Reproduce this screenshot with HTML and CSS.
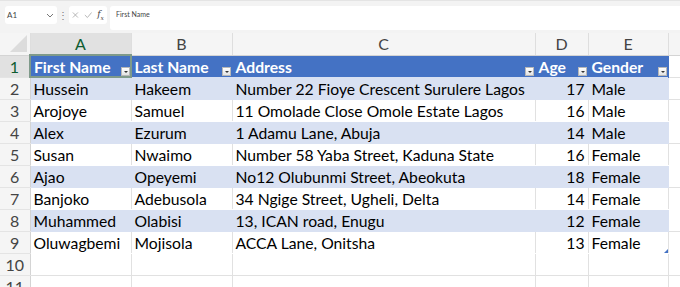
FILE: index.html
```html
<!DOCTYPE html>
<html lang="en">
  <head>
    <meta charset="UTF-8" />
    <title>Sheet1</title>
    <link rel="stylesheet" href="styles.css">
  </head>
  <body>
    <div class="formula-bar">
      <div class="name-box">
        <span>A1</span>
        <svg width="8" height="5" viewBox="0 0 8 5"><path d="M1 1 L4 4 L7 1" fill="none" stroke="#777" stroke-width="1"/></svg>
      </div>
      <div class="grip">&#8942;</div>
      <div class="fx-box">
        <svg width="8" height="8" viewBox="0 0 8 8"><path d="M1 1 L7 7 M7 1 L1 7" stroke="#aaa" stroke-width="1"/></svg>
        <svg width="10" height="8" viewBox="0 0 10 8"><path d="M1 4 L4 7 L9 1" fill="none" stroke="#aaa" stroke-width="1"/></svg>
        <span class="fx">f<sub>x</sub></span>
      </div>
      <div class="formula-input">First Name</div>
    </div>

    <table class="sheet">
      <colgroup>
        <col class="c-row" />
        <col class="c-a" />
        <col class="c-b" />
        <col class="c-c" />
        <col class="c-d" />
        <col class="c-e" />
        <col class="c-f" />
      </colgroup>
      <thead>
        <tr class="col-heads">
          <th class="corner"><span class="corner-tri"></span></th>
          <th class="active">A</th>
          <th>B</th>
          <th>C</th>
          <th>D</th>
          <th>E</th>
          <th></th>
        </tr>
      </thead>
      <tbody>
        <tr class="tbl-head">
          <th class="row-num active">1</th>
          <td class="selected">First Name<span class="filter"></span></td>
          <td>Last Name<span class="filter"></span></td>
          <td>Address<span class="filter"></span></td>
          <td>Age<span class="filter"></span></td>
          <td>Gender<span class="filter"></span></td>
          <td class="blank"></td>
        </tr>
        <tr class="band">
          <th class="row-num">2</th>
          <td>Hussein</td><td>Hakeem</td><td>Number 22 Fioye Crescent Surulere Lagos</td><td class="num">17</td><td>Male</td><td class="blank"></td>
        </tr>
        <tr>
          <th class="row-num">3</th>
          <td>Arojoye</td><td>Samuel</td><td>11 Omolade Close Omole Estate Lagos</td><td class="num">16</td><td>Male</td><td class="blank"></td>
        </tr>
        <tr class="band">
          <th class="row-num">4</th>
          <td>Alex</td><td>Ezurum</td><td>1 Adamu Lane, Abuja</td><td class="num">14</td><td>Male</td><td class="blank"></td>
        </tr>
        <tr>
          <th class="row-num">5</th>
          <td>Susan</td><td>Nwaimo</td><td>Number 58 Yaba Street, Kaduna State</td><td class="num">16</td><td>Female</td><td class="blank"></td>
        </tr>
        <tr class="band">
          <th class="row-num">6</th>
          <td>Ajao</td><td>Opeyemi</td><td>No12 Olubunmi Street, Abeokuta</td><td class="num">18</td><td>Female</td><td class="blank"></td>
        </tr>
        <tr>
          <th class="row-num">7</th>
          <td>Banjoko</td><td>Adebusola</td><td>34 Ngige Street, Ugheli, Delta</td><td class="num">14</td><td>Female</td><td class="blank"></td>
        </tr>
        <tr class="band">
          <th class="row-num">8</th>
          <td>Muhammed</td><td>Olabisi</td><td>13, ICAN road, Enugu</td><td class="num">12</td><td>Female</td><td class="blank"></td>
        </tr>
        <tr class="last">
          <th class="row-num">9</th>
          <td>Oluwagbemi</td><td>Mojisola</td><td>ACCA Lane, Onitsha</td><td class="num">13</td><td class="resize">Female<span class="handle"></span></td><td class="blank"></td>
        </tr>
        <tr class="empty">
          <th class="row-num">10</th>
          <td></td><td></td><td></td><td></td><td></td><td></td>
        </tr>
        <tr class="empty">
          <th class="row-num">11</th>
          <td></td><td></td><td></td><td></td><td></td><td></td>
        </tr>
      </tbody>
    </table>
  </body>
</html>
```

FILE: styles.css
```css
body {
  margin: 0;
  overflow: hidden;
  background: #fff;
  font-family: "Lato", "Liberation Sans", sans-serif;
}

/* formula bar */
.formula-bar {
  display: flex;
  align-items: flex-start;
  height: 33px;
  box-sizing: border-box;
  padding: 5px 0 0 5px;
  background: #f3f3f3;
  border-top: 1px solid #e4e4e4;
}

.name-box {
  display: flex;
  align-items: center;
  justify-content: space-between;
  width: 52px;
  height: 18px;
  box-sizing: border-box;
  padding: 0 3px 0 2px;
  background: #fff;
  border-radius: 3px;
  font-size: 8px;
  color: #444;
}

.grip {
  width: 12px;
  text-align: center;
  font-size: 10px;
  line-height: 18px;
  color: #777;
}

.fx-box {
  display: flex;
  align-items: center;
  gap: 5px;
  width: 38px;
  height: 18px;
  box-sizing: border-box;
  padding: 0 3px;
  background: #fff;
  border-radius: 3px;
}

.fx {
  font-family: "DejaVu Serif", serif;
  font-style: italic;
  font-size: 9px;
  color: #444;
}

.fx sub {
  font-size: 6px;
}

.formula-input {
  flex: 1;
  height: 24px;
  margin-left: 3px;
  box-sizing: border-box;
  padding: 4px 6px;
  background: #fff;
  border-radius: 3px 0 0 3px;
  font-size: 7px;
  color: #444;
}

/* grid */
.sheet {
  border-collapse: collapse;
  table-layout: fixed;
  width: 680px;
  font-size: 15.7px;
}

.c-row { width: 30px; }
.c-a { width: 101px; }
.c-b { width: 101px; }
.c-c { width: 303px; }
.c-d { width: 53px; }
.c-e { width: 80px; }
.c-f { width: 12px; }

.sheet tr {
  height: 22px;
}

.sheet td {
  padding: 0 3px;
  white-space: nowrap;
  overflow: hidden;
  vertical-align: bottom;
  line-height: 20px;
  border-right: 1px solid #e1e1e1;
  border-bottom: 1px solid #e1e1e1;
}

.col-heads th {
  height: 21px;
  padding: 0;
  font-weight: normal;
  font-size: 16px;
  color: #444;
  background: #f5f5f5;
  border-right: 1px solid #dedede;
  border-bottom: 1px solid #d4d4d4;
}

.col-heads th.active {
  background: #e1e1e1;
  color: #0e5c30;
  border-bottom: 2px solid #6a9a80;
}

.corner {
  position: relative;
}

.corner-tri {
  position: absolute;
  right: 3px;
  bottom: 3px;
  width: 0;
  height: 0;
  border-left: 17px solid transparent;
  border-bottom: 17px solid #dcdcdc;
}

.row-num {
  padding: 0;
  font-weight: normal;
  font-size: 16px;
  color: #444;
  text-align: center;
  background: #f5f5f5;
  border-right: 1px solid #d4d4d4;
  border-bottom: 1px solid #e4e4e4;
}

.row-num.active {
  background: #e1e1e1;
  color: #0e5c30;
  border-right: 2px solid #6a9a80;
}

/* table header row */
.tbl-head td {
  position: relative;
  background: #4472c4;
  color: #fff;
  font-weight: bold;
  border-right: 1px solid #4472c4;
  border-bottom: none;
}

.tbl-head td.selected {
  outline: 2px solid #7f9a8a;
  outline-offset: -1px;
}

.tbl-head td.blank,
.sheet td.blank {
  background: #fff;
  border-right: 1px solid #e1e1e1;
  border-bottom: 1px solid #e1e1e1;
}

.filter {
  position: absolute;
  right: 1px;
  bottom: 1px;
  width: 9px;
  height: 9px;
  box-sizing: border-box;
  background: linear-gradient(#ffffff, #e4e4e4);
  border: 1px solid #b8b8b8;
}

.filter::after {
  content: "";
  position: absolute;
  left: 2px;
  top: 3px;
  border-left: 2px solid transparent;
  border-right: 2px solid transparent;
  border-top: 2px solid #333;
}

/* table body */
.band td {
  background: #d9e1f2;
  border-right-color: #d9e1f2;
  border-bottom-color: #d9e1f2;
}

.sheet tbody tr:not(.band):not(.empty):not(.tbl-head) td {
  border-bottom-color: #fff;
}

.sheet tr.last td {
  border-bottom: 1px solid #8ea9db;
}

.sheet tr.last td.blank {
  border-bottom: 1px solid #e1e1e1;
}

.num {
  text-align: right;
  padding-right: 2px;
}

.resize {
  position: relative;
}

.handle {
  position: absolute;
  right: 0;
  bottom: 0;
  width: 0;
  height: 0;
  border-left: 4px solid transparent;
  border-bottom: 4px solid #4472c4;
}
```
